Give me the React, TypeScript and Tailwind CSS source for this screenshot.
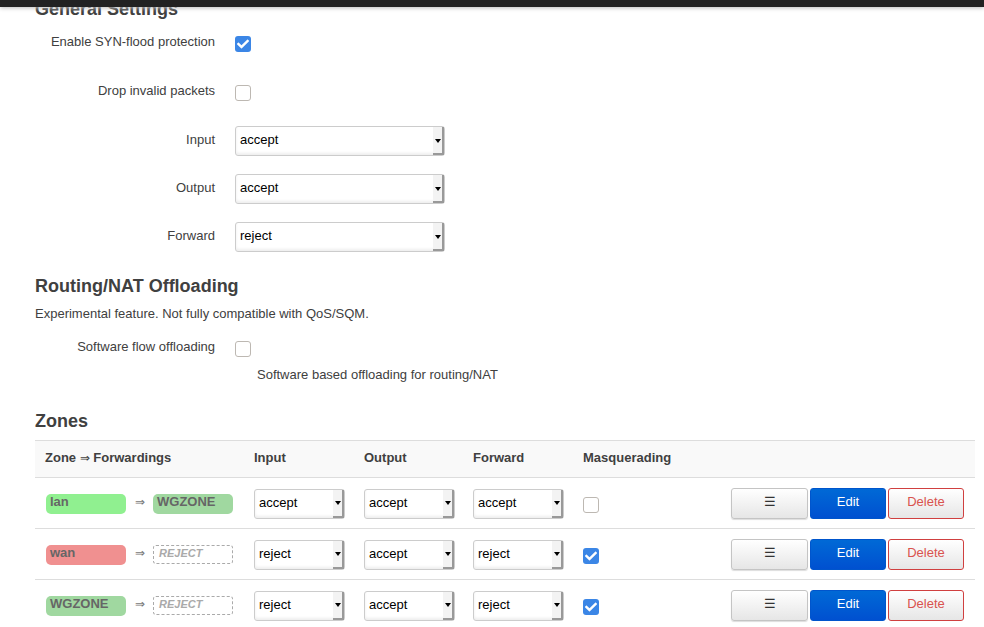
import { FaCheck } from "react-icons/fa";

const Select = ({ value, wide = false }: { value: string; wide?: boolean }) => (
  <div
    className={`flex h-[30px] items-stretch rounded-[3px] border border-[#ccc] bg-white shadow-[inset_0_-2px_3px_#eee] ${
      wide ? "w-[210px]" : "mt-px w-[91px]"
    }`}
  >
    <span className="flex-1 pl-1 text-[13px] leading-[25px] text-black">{value}</span>
    <span className="flex w-[11px] items-center justify-center border-r-2 border-b-2 border-[#999] bg-[#f3f3f3]">
      <span className="mt-px border-x-[3.5px] border-t-4 border-x-transparent border-t-black" />
    </span>
  </div>
);

const Checkbox = ({ checked = false }: { checked?: boolean }) =>
  checked ? (
    <span className="flex h-4 w-4 items-center justify-center rounded-[3px] bg-[#3b86e6]">
      <FaCheck className="h-3 w-3 text-white" />
    </span>
  ) : (
    <span className="block h-4 w-4 rounded-[3px] border border-[#bdb8b2] bg-white" />
  );

const FormRow = ({
  label,
  children,
  className,
  labelClass = "",
}: {
  label: string;
  children: React.ReactNode;
  className: string;
  labelClass?: string;
}) => (
  <div className={`flex ${className}`}>
    <label className={`w-[215px] text-right text-[13px] leading-[18px] text-[#404040] ${labelClass}`}>{label}</label>
    <div className="ml-5">{children}</div>
  </div>
);

const Tag = ({ name, color }: { name: string; color: string }) => (
  <span className={`block h-5 w-20 rounded-[5px] pl-1 text-[13px] font-bold leading-[16px] text-[#666] ${color}`}>
    {name}
  </span>
);

const Reject = () => (
  <span className="block h-[19px] w-20 rounded-[3px] border border-dashed border-[#aaa] pl-[5px] text-[11px] font-bold italic leading-[15px] text-[#aaa]">
    REJECT
  </span>
);

const Button = ({ children, className }: { children: React.ReactNode; className: string }) => (
  <button className={`h-[31px] rounded-[3px] border pb-[2px] text-[13px] leading-[22px] ${className}`}>{children}</button>
);

const gridCols = "grid grid-cols-[209px_110px_109px_110px_1fr] px-[10px]";

const ZoneRow = ({
  zone,
  color,
  target,
  input,
  output,
  forward,
  masq,
}: {
  zone: string;
  color: string;
  target: React.ReactNode;
  input: string;
  output: string;
  forward: string;
  masq: boolean;
}) => (
  <div className={`${gridCols} h-[51px] items-center border-b border-[#ddd]`}>
    <div className="mt-[2px] flex items-start pl-px">
      <Tag name={zone} color={color} />
      <span className="w-[27px] text-center text-[12px] font-normal leading-[16px] text-[#777]">⇒</span>
      {target}
    </div>
    <Select value={input} />
    <Select value={output} />
    <Select value={forward} />
    <div className="flex items-center justify-between pr-px">
      <span className="mt-[3px]">
        <Checkbox checked={masq} />
      </span>
      <div className="flex gap-[2px]">
        <Button className="w-[77px] border-[#c4c4c4] bg-gradient-to-b from-white to-[#e6e6e6] text-[#333] shadow-[0_1px_1px_#ddd]">☰</Button>
        <Button className="w-[76px] border-[#0055cc] bg-gradient-to-b from-[#0069d6] to-[#0050d0] text-white">Edit</Button>
        <Button className="w-[76px] border-[#d04040] bg-gradient-to-b from-white to-[#e6e6e6] text-[#d9534f]">Delete</Button>
      </div>
    </div>
  </div>
);

export default function App() {
  return (
    <div className="relative h-[627px] overflow-hidden bg-white pl-[35px] pr-[9px] font-['Liberation_Sans',Arial,sans-serif] text-[#404040]">
      <div className="absolute inset-x-0 top-0 h-[7px] bg-[#222] shadow-[0_1px_4px_#bbb]" />

      <h3 className="-mt-[3px] h-[25px] text-[18px] font-bold leading-[24px]">General Settings</h3>

      <div className="-ml-[35px]">
        <FormRow label="Enable SYN-flood protection" className="mt-[11px] h-[49px]">
          <span className="mt-[3px] block"><Checkbox checked /></span>
        </FormRow>
        <FormRow label="Drop invalid packets" className="h-[44px]">
          <span className="mt-[3px] block"><Checkbox /></span>
        </FormRow>
        <FormRow label="Input" labelClass="pt-[5px]" className="h-[48px]"><Select value="accept" wide /></FormRow>
        <FormRow label="Output" labelClass="pt-[5px]" className="h-[48px]"><Select value="accept" wide /></FormRow>
        <FormRow label="Forward" labelClass="pt-[5px]" className="h-[48px]"><Select value="reject" wide /></FormRow>
      </div>

      <h3 className="mt-1 h-[25px] text-[18px] font-bold leading-[24px]">Routing/NAT Offloading</h3>
      <p className="mt-[6px] text-[13px] leading-[18px]">Experimental feature. Not fully compatible with QoS/SQM.</p>

      <div className="-ml-[35px]">
        <FormRow label="Software flow offloading" className="mt-[15px]">
          <span className="mt-[3px] block"><Checkbox /></span>
        </FormRow>
        <p className="ml-[257px] mt-[9px] text-[13px] leading-[18px]">Software based offloading for routing/NAT</p>
      </div>

      <h3 className="mt-[25px] h-[25px] text-[18px] font-bold leading-[24px]">Zones</h3>

      <div className="mt-[6px]">
        <div className={`${gridCols} h-[38px] items-center border-y border-[#ddd] bg-[#f9f9f9] pb-[2px] text-[13px] font-bold`}>
          <span>Zone <span className="text-[12px] font-normal">⇒</span> Forwardings</span>
          <span>Input</span>
          <span>Output</span>
          <span>Forward</span>
          <span>Masquerading</span>
        </div>
        <ZoneRow zone="lan" color="bg-[#90f090]" target={<Tag name="WGZONE" color="bg-[#a0d8a0]" />} input="accept" output="accept" forward="accept" masq={false} />
        <ZoneRow zone="wan" color="bg-[#f09090]" target={<Reject />} input="reject" output="accept" forward="reject" masq />
        <ZoneRow zone="WGZONE" color="bg-[#a0d8a0]" target={<Reject />} input="reject" output="accept" forward="reject" masq />
      </div>
    </div>
  );
}
